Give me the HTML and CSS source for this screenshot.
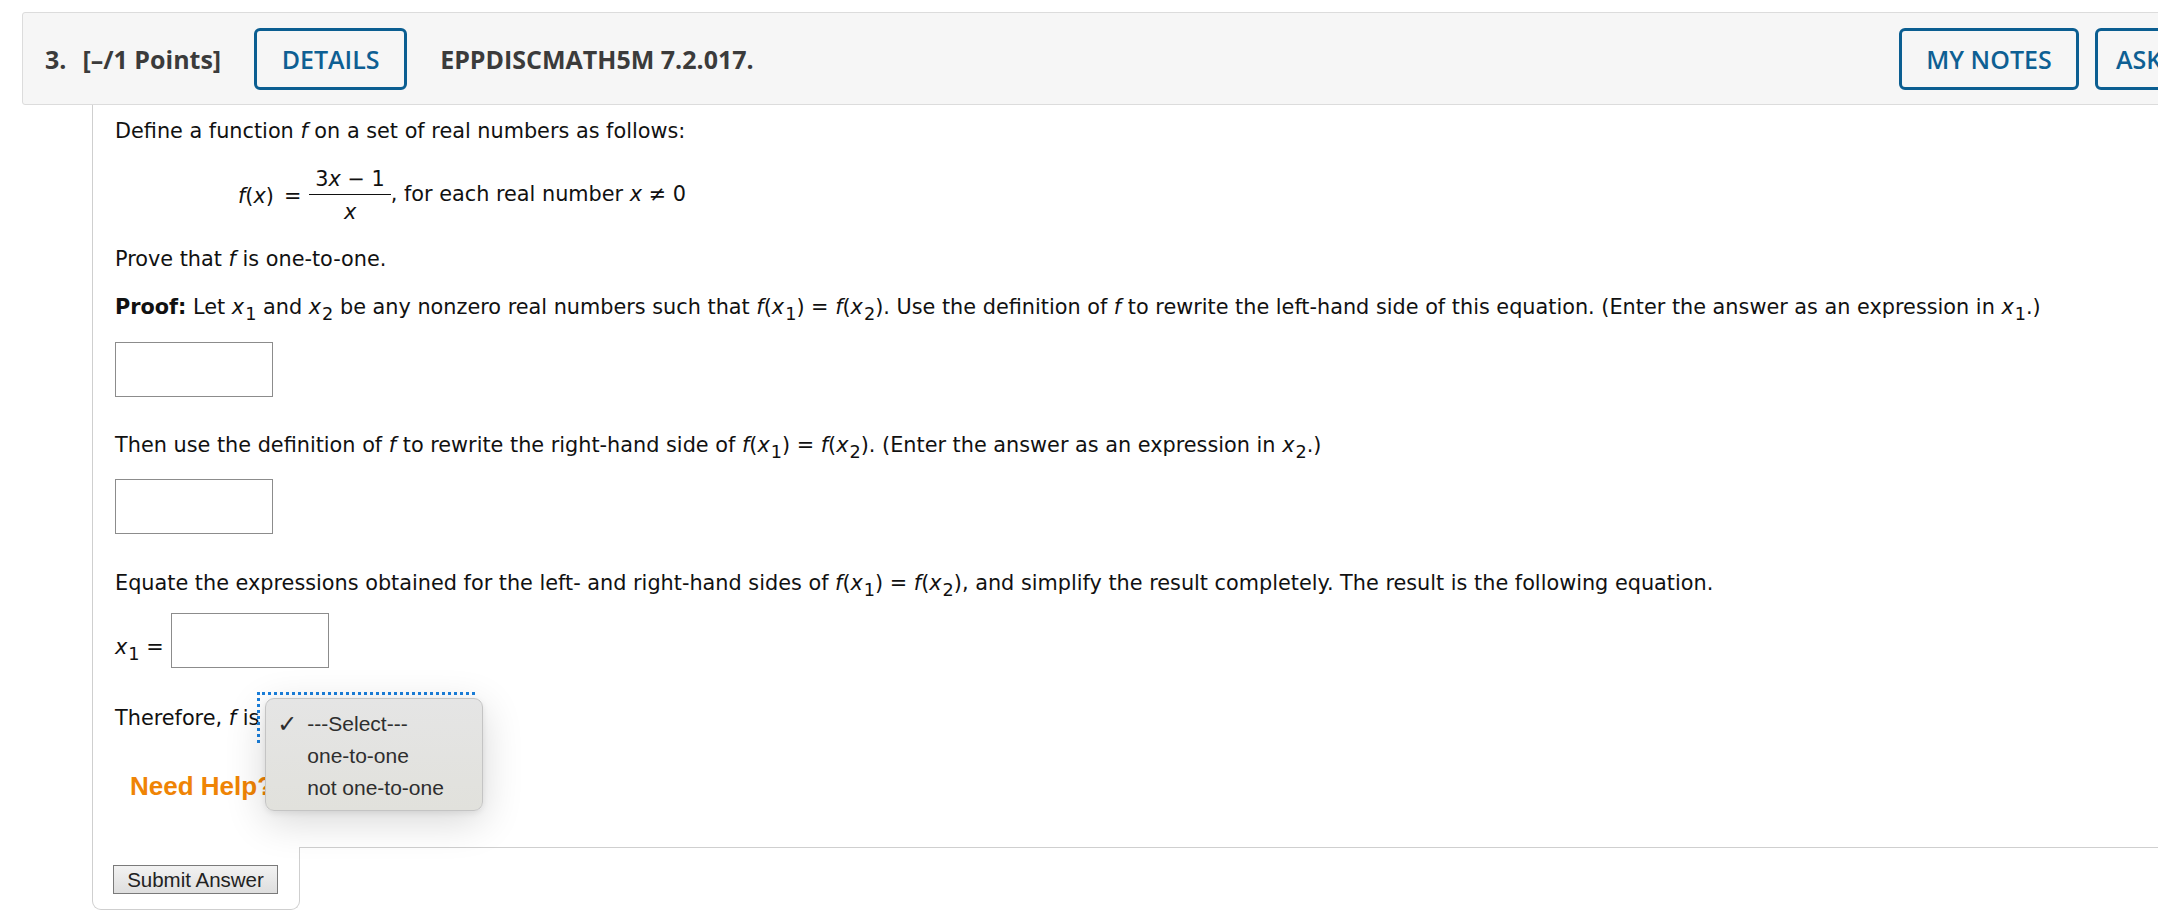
FILE: index.html
```html
<!DOCTYPE html>
<html>
<head>
<meta charset="utf-8">
<link rel="stylesheet" href="styles.css">
</head>
<body>
<div class="page">
  <div class="qhead">
    <span class="qnum">3.</span>
    <span class="qpts">[–/1 Points]</span>
    <span class="hbtn details">DETAILS</span>
    <span class="qid">EPPDISCMATH5M 7.2.017.</span>
    <span class="hbtn notes">MY NOTES</span>
    <span class="hbtn ask">ASK YOUR TEACHER</span>
  </div>
  <div class="qbody">
    <div class="content">
      <p class="line l-define">Define a function <i>f</i> on a set of real numbers as follows:</p>
      <div class="formula">
        <span class="lhs"><i>f</i>(<i>x</i>)<span class="eq">=</span></span>
        <span class="frac"><span class="num">3<i>x</i> − 1</span><span class="den"><i>x</i></span></span>
        <span class="rest">, for each real number <i>x</i> ≠ 0</span>
      </div>
      <p class="line l-prove">Prove that <i>f</i> is one-to-one.</p>
      <p class="line l-proof"><b>Proof:</b> Let <i>x</i><sub>1</sub> and <i>x</i><sub>2</sub> be any nonzero real numbers such that <i>f</i>(<i>x</i><sub>1</sub>) = <i>f</i>(<i>x</i><sub>2</sub>). Use the definition of <i>f</i> to rewrite the left-hand side of this equation. (Enter the answer as an expression in <i>x</i><sub>1</sub>.)</p>
      <div class="ans a1"></div>
      <p class="line l-then">Then use the definition of <i>f</i> to rewrite the right-hand side of <i>f</i>(<i>x</i><sub>1</sub>) = <i>f</i>(<i>x</i><sub>2</sub>). (Enter the answer as an expression in <i>x</i><sub>2</sub>.)</p>
      <div class="ans a2"></div>
      <p class="line l-equate">Equate the expressions obtained for the left- and right-hand sides of <i>f</i>(<i>x</i><sub>1</sub>) = <i>f</i>(<i>x</i><sub>2</sub>), and simplify the result completely. The result is the following equation.</p>
      <div class="x1row"><span class="x1lab"><i>x</i><sub>1</sub> =</span><div class="ans a3"></div></div>
      <div class="thereRow">
        <span class="therefore">Therefore, <i>f</i> is</span>
        <span class="selectwrap">
          <span class="focusring"></span>
          <div class="menu">
            <div class="opt"><span class="chk">✓</span>---Select---</div>
            <div class="opt"><span class="chk"></span>one-to-one</div>
            <div class="opt"><span class="chk"></span>not one-to-one</div>
          </div>
        </span>
      </div>
      <div class="help">Need Help?</div>
    </div>
    <div class="foot">
      <div class="submittab"><span class="submit">Submit Answer</span></div>
      <div class="filler"></div>
    </div>
  </div>
</div>
</body>
</html>
```
FILE: styles.css
```css
html, body {
  margin: 0;
  padding: 0;
  background: #fff;
  overflow: hidden;
}
body {
  width: 2158px;
  height: 912px;
}
.page {
  padding: 12px 0 0 22px;
}
.qhead {
  box-sizing: border-box;
  width: 2400px;
  height: 93px;
  background: #f6f6f6;
  border: 1px solid #dcdcdc;
  border-radius: 3px;
  display: flex;
  align-items: center;
  font-family: "Open Sans", sans-serif;
  font-weight: 700;
  font-size: 25px;
  color: #3b3b3b;
  padding-left: 22px;
  padding-right: 20px;
  white-space: nowrap;
}
.qnum { margin-right: 16px; }
.qpts { margin-right: 33px; }
.hbtn {
  box-sizing: border-box;
  height: 62px;
  display: flex;
  align-items: center;
  justify-content: center;
  border: 3px solid #0b5e91;
  border-radius: 6px;
  color: #0e5f93;
  font-weight: 600;
  font-size: 25px;
  background: #f6f6f6;
  white-space: nowrap;
  flex: none;
}
.details { width: 153px; margin-right: 33px; }
.qid { color: #3b3b3b; }
.notes { width: 180px; margin-left: auto; margin-right: 16px; }
.ask { width: 306px; justify-content: flex-start; padding-left: 18px; }

.qbody {
  margin-left: 70px;
  font-family: "DejaVu Sans", Verdana, sans-serif;
  font-size: 20.8px;
  color: #111;
}
.content {
  border-left: 1px solid #cfcfcf;
  padding: 14px 0 46px 22px;
}
.line {
  margin: 0;
  line-height: 24px;
  white-space: nowrap;
}
sub {
  font-size: 0.85em;
  vertical-align: -0.35em;
  line-height: 0;
  margin-left: 1px;
}
i { font-style: italic; }
.formula {
  display: flex;
  align-items: center;
  margin: 24px 0 0 123px;
  white-space: nowrap;
}
.eq { margin-left: 10px; }
.frac {
  display: inline-flex;
  flex-direction: column;
  align-items: stretch;
  text-align: center;
  margin-left: 8px;
}
.num {
  line-height: 24px;
  padding: 0 6px;
  border-bottom: 1.5px solid #111;
  padding-bottom: 3px;
}
.den {
  line-height: 24px;
  padding-top: 5px;
}
.rest { margin-top: -4px; white-space: pre; }
.l-prove { margin-top: 23px; }
.l-proof { margin-top: 24px; }
.ans {
  box-sizing: border-box;
  width: 158px;
  height: 55px;
  border: 1px solid #8c8c8c;
  background: #fff;
}
.a1 { margin-top: 23px; }
.l-then { margin-top: 36px; }
.a2 { margin-top: 22px; }
.l-equate { margin-top: 37px; }
.x1row {
  display: flex;
  align-items: center;
  margin-top: 18px;
}
.x1lab { margin-top: 12px; width: 56px; }
.thereRow {
  display: flex;
  align-items: center;
  margin-top: 24px;
  height: 51px;
}
.therefore { color: #111; }
.selectwrap {
  position: relative;
  display: inline-block;
  width: 218px;
  height: 51px;
  margin-left: -2px;
}
.focusring {
  position: absolute;
  inset: 0;
  border: 3px dotted #1a7fdc;
  border-right: none;
  border-bottom: none;
}
.menu {
  position: absolute;
  left: 8px;
  top: 6px;
  width: 218px;
  height: 113px;
  box-sizing: border-box;
  padding-top: 9px;
  border: 1px solid #c4c4c4;
  border-radius: 9px;
  background: linear-gradient(#e5e5e5, #e1e1dc);
  box-shadow: 0 10px 40px rgba(0,0,0,0.16), 0 2px 6px rgba(0,0,0,0.08);
  font-family: "Liberation Sans", Arial, sans-serif;
  font-size: 21px;
  color: #2e2e2e;
  z-index: 5;
}
.opt {
  height: 32px;
  display: flex;
  align-items: center;
}
.chk {
  width: 30px;
  padding-left: 11px;
  font-family: "DejaVu Sans", sans-serif;
  font-size: 24px;
  line-height: 24px;
}
.help {
  margin: 28px 0 0 15px;
  font-family: "Liberation Sans", Arial, sans-serif;
  font-weight: 700;
  font-size: 26px;
  color: #ef8405;
  line-height: 30px;
}
.foot {
  display: flex;
  align-items: flex-start;
}
.submittab {
  box-sizing: border-box;
  width: 208px;
  height: 63px;
  border: 1px solid #cfcfcf;
  border-top: none;
  border-radius: 0 0 9px 9px;
  padding: 18px 0 0 20px;
}
.filler {
  flex: 1;
  border-top: 1px solid #cfcfcf;
}
.submit {
  box-sizing: border-box;
  display: inline-flex;
  align-items: center;
  justify-content: center;
  width: 165px;
  height: 29px;
  border: 1px solid #7a7a7a;
  background: linear-gradient(#f2f2f2, #dedede);
  font-family: "Liberation Sans", Arial, sans-serif;
  font-size: 20.5px;
  color: #222;
}
```
